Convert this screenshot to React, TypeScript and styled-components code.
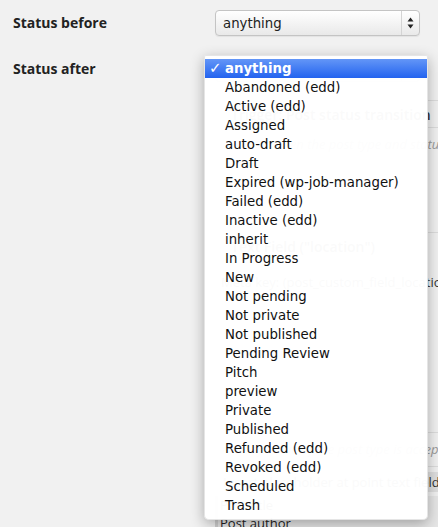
import React from 'react';
import styled, { createGlobalStyle } from 'styled-components';

const GlobalStyle = createGlobalStyle`
  html, body {
    margin: 0;
    padding: 0;
    background: #f1f1f1;
    overflow: hidden;
  }
  #root {
    width: 438px;
    height: 527px;
    overflow: hidden;
  }
`;

const STATUSES = [
  'anything',
  'Abandoned (edd)',
  'Active (edd)',
  'Assigned',
  'auto-draft',
  'Draft',
  'Expired (wp-job-manager)',
  'Failed (edd)',
  'Inactive (edd)',
  'inherit',
  'In Progress',
  'New',
  'Not pending',
  'Not private',
  'Not published',
  'Pending Review',
  'Pitch',
  'preview',
  'Private',
  'Published',
  'Refunded (edd)',
  'Revoked (edd)',
  'Scheduled',
  'Trash',
];

const App = () => {
  return (
    <>
      <GlobalStyle />
      <Page>
        <FormTable>
          <Label>Status before</Label>
          <Field>
            <Select>
              <SelectText>anything</SelectText>
              <SelectArrows>
                <svg width="7" height="12" viewBox="0 0 7 12">
                  <path d="M3.5 0.5 L6.5 4.5 L0.5 4.5 Z" fill="#222" />
                  <path d="M3.5 11.5 L6.5 7.5 L0.5 7.5 Z" fill="#222" />
                </svg>
              </SelectArrows>
            </Select>
          </Field>

          <Label>Status after</Label>
          <Field>
            <Select>
              <SelectArrows />
            </Select>
            <Menu>
              {STATUSES.map((s, i) => (
                <MenuItem key={s} $active={i === 0}>
                  {i === 0 && <Check>✓</Check>}
                  {s}
                </MenuItem>
              ))}
            </Menu>
          </Field>
        </FormTable>

        {/* metabox that the open menu covers; only its right edge shows */}
        <Metabox>
          <BoxRow $height={27}>
            <BoxTitle>Trigger: Post status transition</BoxTitle>
          </BoxRow>
          <BoxRow $height={105}>
            <BoxHint>Fires when the post type and status change</BoxHint>
          </BoxRow>
          <BoxRow $height={200}>
            <BoxTitle>Text Field ("location")</BoxTitle>
            <BoxText>Meta key: (post_custom_field_location)</BoxText>
          </BoxRow>
          <BoxRow $height={34}>
            <BoxHint>Any value of the post type is accepted</BoxHint>
          </BoxRow>
          <InsertBar>Insert placeholder at point text field below</InsertBar>
          <AuthorList>
            <AuthorItem>Post title</AuthorItem>
            <AuthorItem>Post author</AuthorItem>
          </AuthorList>
        </Metabox>
      </Page>
    </>
  );
};

export default App;

const Page = styled.div`
  width: 438px;
  height: 527px;
  font-family: 'Open Sans', 'DejaVu Sans', sans-serif;
  color: #222;
`;

const FormTable = styled.div`
  display: grid;
  grid-template-columns: 202px 205px;
  grid-auto-rows: 26px;
  row-gap: 20px;
  padding: 10px 0 0 13px;
`;

const Label = styled.div`
  display: flex;
  align-items: center;
  font-size: 14px;
  font-weight: 700;
  color: #222;
  padding-bottom: 2px;
`;

const Field = styled.div`
  position: relative;
`;

const Select = styled.div`
  box-sizing: border-box;
  height: 26px;
  width: 205px;
  display: flex;
  align-items: center;
  justify-content: flex-end;
  border: 1px solid #c4c4c4;
  border-radius: 4px;
  background: linear-gradient(#ffffff, #f4f4f4 50%, #e9e9e9);
  box-shadow: 0 1px 1px rgba(0, 0, 0, 0.06);
`;

const SelectText = styled.span`
  flex: 1;
  padding-left: 7px;
  font-family: 'DejaVu Sans', sans-serif;
  font-size: 13.3px;
  color: #222;
`;

const SelectArrows = styled.span`
  width: 17px;
  height: 100%;
  display: flex;
  align-items: center;
  justify-content: center;
  border-left: 1px solid #d4d4d4;
`;

const Menu = styled.div`
  position: absolute;
  top: -1px;
  left: -11px;
  width: 224px;
  padding: 3px 0 4px;
  box-sizing: border-box;
  background: rgba(255, 255, 255, 0.975);
  border: 1px solid rgba(0, 0, 0, 0.1);
  border-radius: 2px 2px 5px 5px;
  box-shadow: 0 4px 14px rgba(0, 0, 0, 0.3);
  z-index: 10;
`;

const MenuItem = styled.div<{ $active?: boolean }>`
  position: relative;
  height: 19px;
  line-height: 19px;
  padding-left: 20px;
  font-family: 'DejaVu Sans', sans-serif;
  font-size: 13.3px;
  font-weight: ${p => (p.$active ? 700 : 400)};
  white-space: nowrap;
  color: ${p => (p.$active ? '#fff' : '#111')};
  background: ${p => (p.$active ? 'linear-gradient(#6396f7, #2363ef)' : 'transparent')};
`;

const Check = styled.span`
  position: absolute;
  left: 4px;
  top: 0;
  font-size: 15px;
  font-weight: 700;
`;

const Metabox = styled.div`
  margin: 18px 0 0 215px;
  width: 300px;
  border-top: 1px solid #dcdcdc;
`;

const BoxRow = styled.div<{ $height: number }>`
  box-sizing: border-box;
  height: ${p => p.$height}px;
  padding: 6px 8px;
  border-bottom: 1px solid #dcdcdc;
  white-space: nowrap;
`;

const BoxTitle = styled.div`
  font-size: 14px;
  font-weight: 600;
  color: #333;
  line-height: 16px;
  margin-left: 8px;
`;

const BoxHint = styled.div`
  font-size: 13px;
  font-style: italic;
  color: #999;
  line-height: 20px;
  margin-left: 20px;
`;

const BoxText = styled.div`
  font-size: 13px;
  color: #333;
  margin-top: 18px;
  margin-left: -2px;
`;

const InsertBar = styled.div`
  margin-top: 5px;
  height: 20px;
  line-height: 20px;
  padding-left: 8px;
  background: #dedede;
  font-size: 13px;
  color: #333;
  white-space: nowrap;
`;

const AuthorList = styled.div`
  margin-top: 4px;
  border-left: 3px solid #cfcfcf;
  background: #e6e6e6;
`;

const AuthorItem = styled.div`
  height: 18px;
  line-height: 18px;
  padding-left: 2px;
  font-size: 13px;
  color: #222;
`;
